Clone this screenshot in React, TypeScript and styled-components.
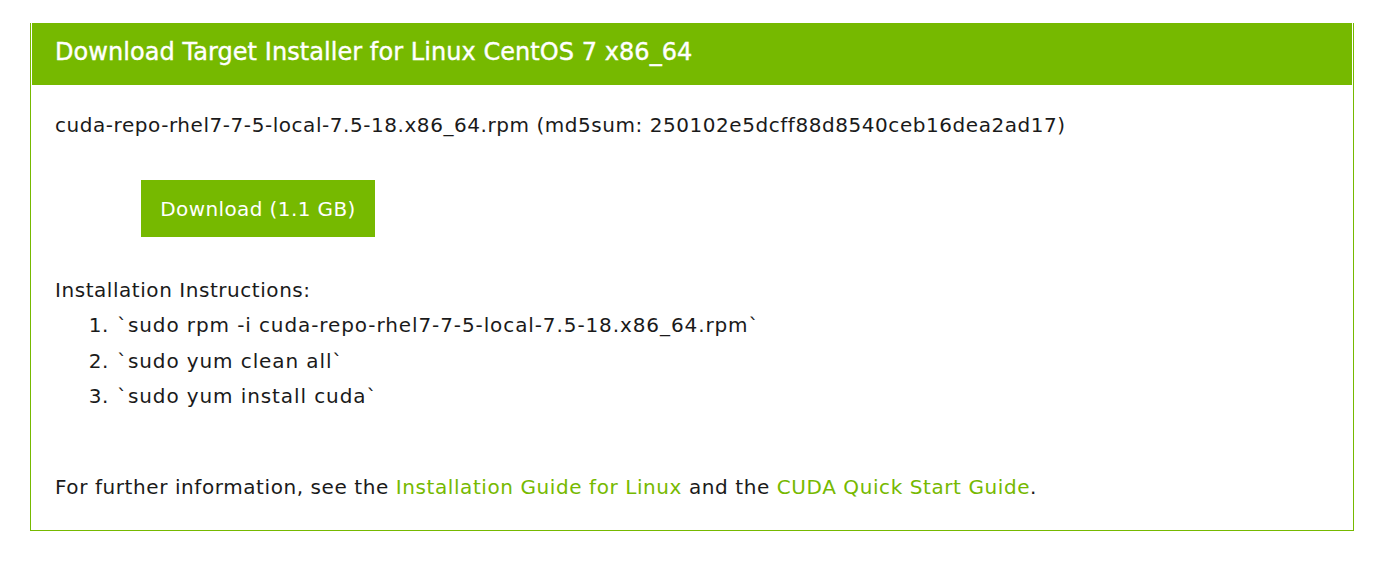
import {FC} from "react";
import styled, {createGlobalStyle} from "styled-components";

const GlobalStyle = createGlobalStyle`
	html, body {
		margin: 0;
		padding: 0;
		background: #ffffff;
	}
	body {
		font-family: "DejaVu Sans", Roboto, sans-serif;
		color: #1a1a1a;
	}
`;

const Page = styled.div`
	padding: 23px 34px 0 30px;
`;

const Panel = styled.section`
	border: 1px solid #76b900;
	border-top: none;
	box-sizing: border-box;
	width: 1324px;
	height: 508px;
`;

const Header = styled.h2`
	margin: 0 1px;
	height: 62px;
	box-sizing: border-box;
	padding: 0 23px 4px;
	display: flex;
	align-items: center;
	background: #76b900;
	color: #ffffff;
	font-size: 24px;
	font-weight: 400;
	letter-spacing: 0.06px;
	-webkit-text-stroke: 0.4px #ffffff;
`;

const Body = styled.div`
	padding: 26px 24px 0;
	font-size: 20px;
	line-height: 28px;
	letter-spacing: 0.55px;
`;

const FileLine = styled.p`
	margin: 0;
`;

const DownloadButton = styled.a`
	display: inline-flex;
	align-items: center;
	justify-content: center;
	margin: 41px 0 0 86px;
	width: 234px;
	height: 57px;
	background: #76b900;
	color: #ffffff;
	font-size: 20px;
	letter-spacing: 0.4px;
	text-decoration: none;
`;

const Heading = styled.p`
	margin: 39px 0 0;
`;

const Steps = styled.ol`
	margin: 4px 0 0;
	padding: 0;
	list-style: none;
	counter-reset: step;

	li {
		counter-increment: step;
		line-height: 35.5px;
		letter-spacing: 0.9px;
	}

	li::before {
		content: counter(step) ".";
		display: inline-block;
		width: 54px;
		margin-right: 8px;
		text-align: right;
		letter-spacing: 0.55px;
	}
`;

const Footer = styled.p`
	margin: 58px 0 0;
	letter-spacing: 0.58px;
`;

const GuideLink = styled.a`
	color: #76b900;
	text-decoration: none;
`;

const steps = [
	"`sudo rpm -i cuda-repo-rhel7-7-5-local-7.5-18.x86_64.rpm`",
	"`sudo yum clean all`",
	"`sudo yum install cuda`",
];

const App: FC = () => {
	return (
		<>
			<GlobalStyle />
			<Page>
				<Panel>
					<Header>Download Target Installer for Linux CentOS 7 x86_64</Header>
					<Body>
						<FileLine>
							cuda-repo-rhel7-7-5-local-7.5-18.x86_64.rpm (md5sum: 250102e5dcff88d8540ceb16dea2ad17)
						</FileLine>
						<DownloadButton href="#">Download (1.1 GB)</DownloadButton>
						<Heading>Installation Instructions:</Heading>
						<Steps>
							{steps.map((step) => (
								<li key={step}>{step}</li>
							))}
						</Steps>
						<Footer>
							For further information, see the{" "}
							<GuideLink href="#">Installation Guide for Linux</GuideLink> and the{" "}
							<GuideLink href="#">CUDA Quick Start Guide</GuideLink>.
						</Footer>
					</Body>
				</Panel>
			</Page>
		</>
	);
};

export default App;
